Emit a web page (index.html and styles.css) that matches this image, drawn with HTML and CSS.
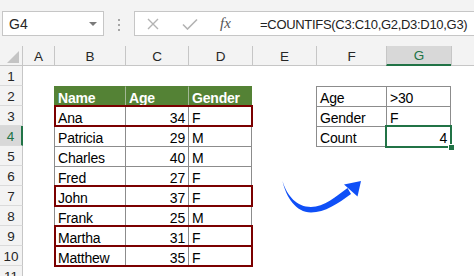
FILE: index.html
```html
<!DOCTYPE html>
<html>
<head>
<meta charset="utf-8">
<link rel="stylesheet" href="styles.css">
</head>
<body>
<div class="app">
  <div class="fbar">
    <div class="namebox"><span>G4</span><span class="caret"></span></div>
    <div class="grip"><i></i><i></i><i></i></div>
    <div class="fbox">
      <svg class="ico-x" width="12" height="12" viewBox="0 0 12 12"><path d="M1 1 L11 11 M11 1 L1 11" stroke="#b3b3b3" stroke-width="1.4" fill="none"/></svg>
      <svg class="ico-check" width="16" height="12" viewBox="0 0 16 12"><path d="M1 6.5 L5.5 11 L15 1.5" stroke="#b3b3b3" stroke-width="1.6" fill="none"/></svg>
      <span class="fx"><i>f</i>x</span>
      <span class="formula">=COUNTIFS(C3:C10,G2,D3:D10,G3)</span>
    </div>
  </div>

  <div class="sheet">
    <div class="corner"><span class="tri"></span></div>
    <div class="ch first">A</div>
    <div class="ch">B</div>
    <div class="ch">C</div>
    <div class="ch">D</div>
    <div class="ch">E</div>
    <div class="ch">F</div>
    <div class="ch sel">G</div>
    <div class="ch"></div>

    <div class="rh r1">1</div>
    <div class="rh r2">2</div>
    <div class="rh r3">3</div>
    <div class="rh r4 sel">4</div>
    <div class="rh r5">5</div>
    <div class="rh r6">6</div>
    <div class="rh r7">7</div>
    <div class="rh r8">8</div>
    <div class="rh r9">9</div>
    <div class="rh r10">10</div>
    <div class="rh r11">11</div>

    <div class="tbl">
      <div class="row hdr"><div class="cell">Name</div><div class="cell">Age</div><div class="cell">Gender</div></div>
      <div class="row hl"><div class="cell">Ana</div><div class="cell num">34</div><div class="cell">F</div></div>
      <div class="row"><div class="cell">Patricia</div><div class="cell num">29</div><div class="cell">M</div></div>
      <div class="row"><div class="cell">Charles</div><div class="cell num">40</div><div class="cell">M</div></div>
      <div class="row"><div class="cell">Fred</div><div class="cell num">27</div><div class="cell">F</div></div>
      <div class="row hl"><div class="cell">John</div><div class="cell num">37</div><div class="cell">F</div></div>
      <div class="row"><div class="cell">Frank</div><div class="cell num">25</div><div class="cell">M</div></div>
      <div class="row hl"><div class="cell">Martha</div><div class="cell num">31</div><div class="cell">F</div></div>
      <div class="row hl last"><div class="cell">Matthew</div><div class="cell num">35</div><div class="cell">F</div></div>
    </div>

    <div class="crit">
      <div class="row"><div class="cell">Age</div><div class="cell">&gt;30</div></div>
      <div class="row"><div class="cell">Gender</div><div class="cell">F</div></div>
      <div class="row last"><div class="cell">Count</div><div class="cell num active">4</div></div>
    </div>
  </div>

  <svg class="arrow" width="474" height="276" viewBox="0 0 474 276">
    <path d="M282.5 181 C286 197 296 212.5 311 212.5 C325 212.5 338 203.5 351 194 L347.5 188 C336 196.5 324 207 311 207 C297 207 287 196 282.5 181 Z" fill="#0f4ff7"/>
    <polygon points="344,184.5 361,181 357.5,196.5" fill="#0f4ff7"/>
  </svg>
</div>
</body>
</html>
```
FILE: styles.css
```css
html, body {
  margin: 0;
  padding: 0;
  background: #ffffff;
}
body {
  width: 474px;
  height: 276px;
  overflow: hidden;
  font-family: "Liberation Sans", Arial, sans-serif;
}
.app {
  position: relative;
  width: 474px;
  height: 276px;
  overflow: hidden;
}

/* formula bar */
.fbar {
  height: 46px;
  box-sizing: border-box;
  padding-top: 11px;
  background: #f3f3f3;
  display: flex;
  align-items: flex-start;
}
.namebox {
  margin-left: 2px;
  width: 102px;
  height: 25px;
  box-sizing: border-box;
  border: 1px solid #c6c6c6;
  background: #fff;
  display: flex;
  align-items: center;
  justify-content: space-between;
  padding-left: 6px;
  font-size: 14px;
  color: #262626;
}
.caret {
  width: 0;
  height: 0;
  border-left: 4px solid transparent;
  border-right: 4px solid transparent;
  border-top: 4px solid #7a7a7a;
  margin-right: 6px;
}
.grip {
  width: 30px;
  height: 25px;
  box-sizing: border-box;
  padding-top: 8px;
  display: flex;
  flex-direction: column;
  align-items: center;
  gap: 3px;
}
.grip i {
  display: block;
  width: 2px;
  height: 2px;
  background: #a6a6a6;
}
.fbox {
  flex: 1;
  height: 25px;
  box-sizing: border-box;
  border: 1px solid #c6c6c6;
  border-right: none;
  background: #fff;
  display: flex;
  align-items: center;
  white-space: nowrap;
  overflow: hidden;
}
.ico-x { margin-left: 12px; flex: none; }
.ico-check { margin-left: 23px; flex: none; }
.fx {
  margin-left: 22px;
  font-family: "Liberation Serif", serif;
  font-style: italic;
  font-size: 15px;
  color: #555;
  width: 11px;
  flex: none;
}
.fx i { font-style: italic; }
.formula {
  margin-left: 29px;
  font-size: 13px;
  letter-spacing: -0.3px;
  color: #222;
  padding-top: 1px;
}

/* sheet grid */
.sheet {
  display: grid;
  grid-template-columns: 23px 31px 71px 63px 64px 64px 70px 65px 23px;
  grid-template-rows: repeat(12, 20px);
  font-size: 14px;
}
.corner {
  background: #f3f3f3;
  border-right: 1px solid #c6c6c6;
  border-bottom: 1px solid #c6c6c6;
  box-sizing: border-box;
  display: flex;
  align-items: flex-end;
  justify-content: flex-end;
  padding: 0 3px 2px 0;
}
.tri {
  width: 0;
  height: 0;
  border-left: 12px solid transparent;
  border-bottom: 12px solid #c4c4c4;
}
.ch {
  background: #f3f3f3;
  border-left: 1px solid #c6c6c6;
  border-bottom: 1px solid #c6c6c6;
  box-sizing: border-box;
  display: flex;
  align-items: center;
  justify-content: center;
  font-size: 13.5px;
  color: #262626;
  padding-top: 1px;
}
.ch.first { border-left: none; }
.ch.sel {
  background: #d8d8d8;
  color: #217346;
  border-bottom: 2px solid #217346;
}
.rh {
  grid-column: 1;
  background: #f3f3f3;
  border-right: 1px solid #c6c6c6;
  border-bottom: 1px solid #dadada;
  box-sizing: border-box;
  display: flex;
  align-items: center;
  justify-content: center;
  font-size: 13.5px;
  color: #262626;
  padding-top: 1px;
}
.rh.sel {
  background: #d8d8d8;
  color: #217346;
  border-right: 2px solid #217346;
}

/* data table */
.tbl {
  grid-column: 3 / 6;
  grid-row: 3 / 12;
  display: flex;
  flex-direction: column;
}
.crit {
  grid-column: 7 / 9;
  grid-row: 3 / 6;
  display: flex;
  flex-direction: column;
}
.row {
  position: relative;
  height: 20px;
  display: grid;
  grid-template-columns: 71px 63px 64px;
}
.crit .row { grid-template-columns: 70px 65px; }
.cell {
  box-sizing: border-box;
  border-left: 1px solid #8c8c8c;
  border-top: 1px solid #8c8c8c;
  display: flex;
  align-items: center;
  padding: 3px 3px 0 3px;
  color: #000;
  letter-spacing: -0.2px;
  white-space: nowrap;
}
.cell:last-child { border-right: 1px solid #8c8c8c; }
.row.last .cell { border-bottom: 1px solid #8c8c8c; }
.cell.num { justify-content: flex-end; }

.row.hdr .cell {
  background: #548235;
  color: #fff;
  font-weight: bold;
  border-top-color: #548235;
  border-left-color: #a3b896;
}
.row.hdr .cell:first-child { border-left-color: #548235; }
.row.hdr .cell:last-child { border-right-color: #548235; }

.row.hl::after {
  content: "";
  position: absolute;
  left: 0;
  right: -1px;
  top: -1px;
  bottom: -1px;
  border: 2px solid #7b0000;
  pointer-events: none;
  z-index: 1;
}
.row.hl.last::after { bottom: -1px; }

.cell.active { position: relative; }
.cell.active::after {
  content: "";
  position: absolute;
  left: -2px;
  right: -2px;
  top: -2px;
  bottom: -2px;
  border: 2px solid #217346;
  pointer-events: none;
}
.cell.active::before {
  content: "";
  position: absolute;
  right: -4px;
  bottom: -4px;
  width: 5px;
  height: 5px;
  background: #217346;
  border-left: 1px solid #fff;
  border-top: 1px solid #fff;
  z-index: 2;
}

.arrow {
  position: absolute;
  left: 0;
  top: 0;
  pointer-events: none;
}
```
